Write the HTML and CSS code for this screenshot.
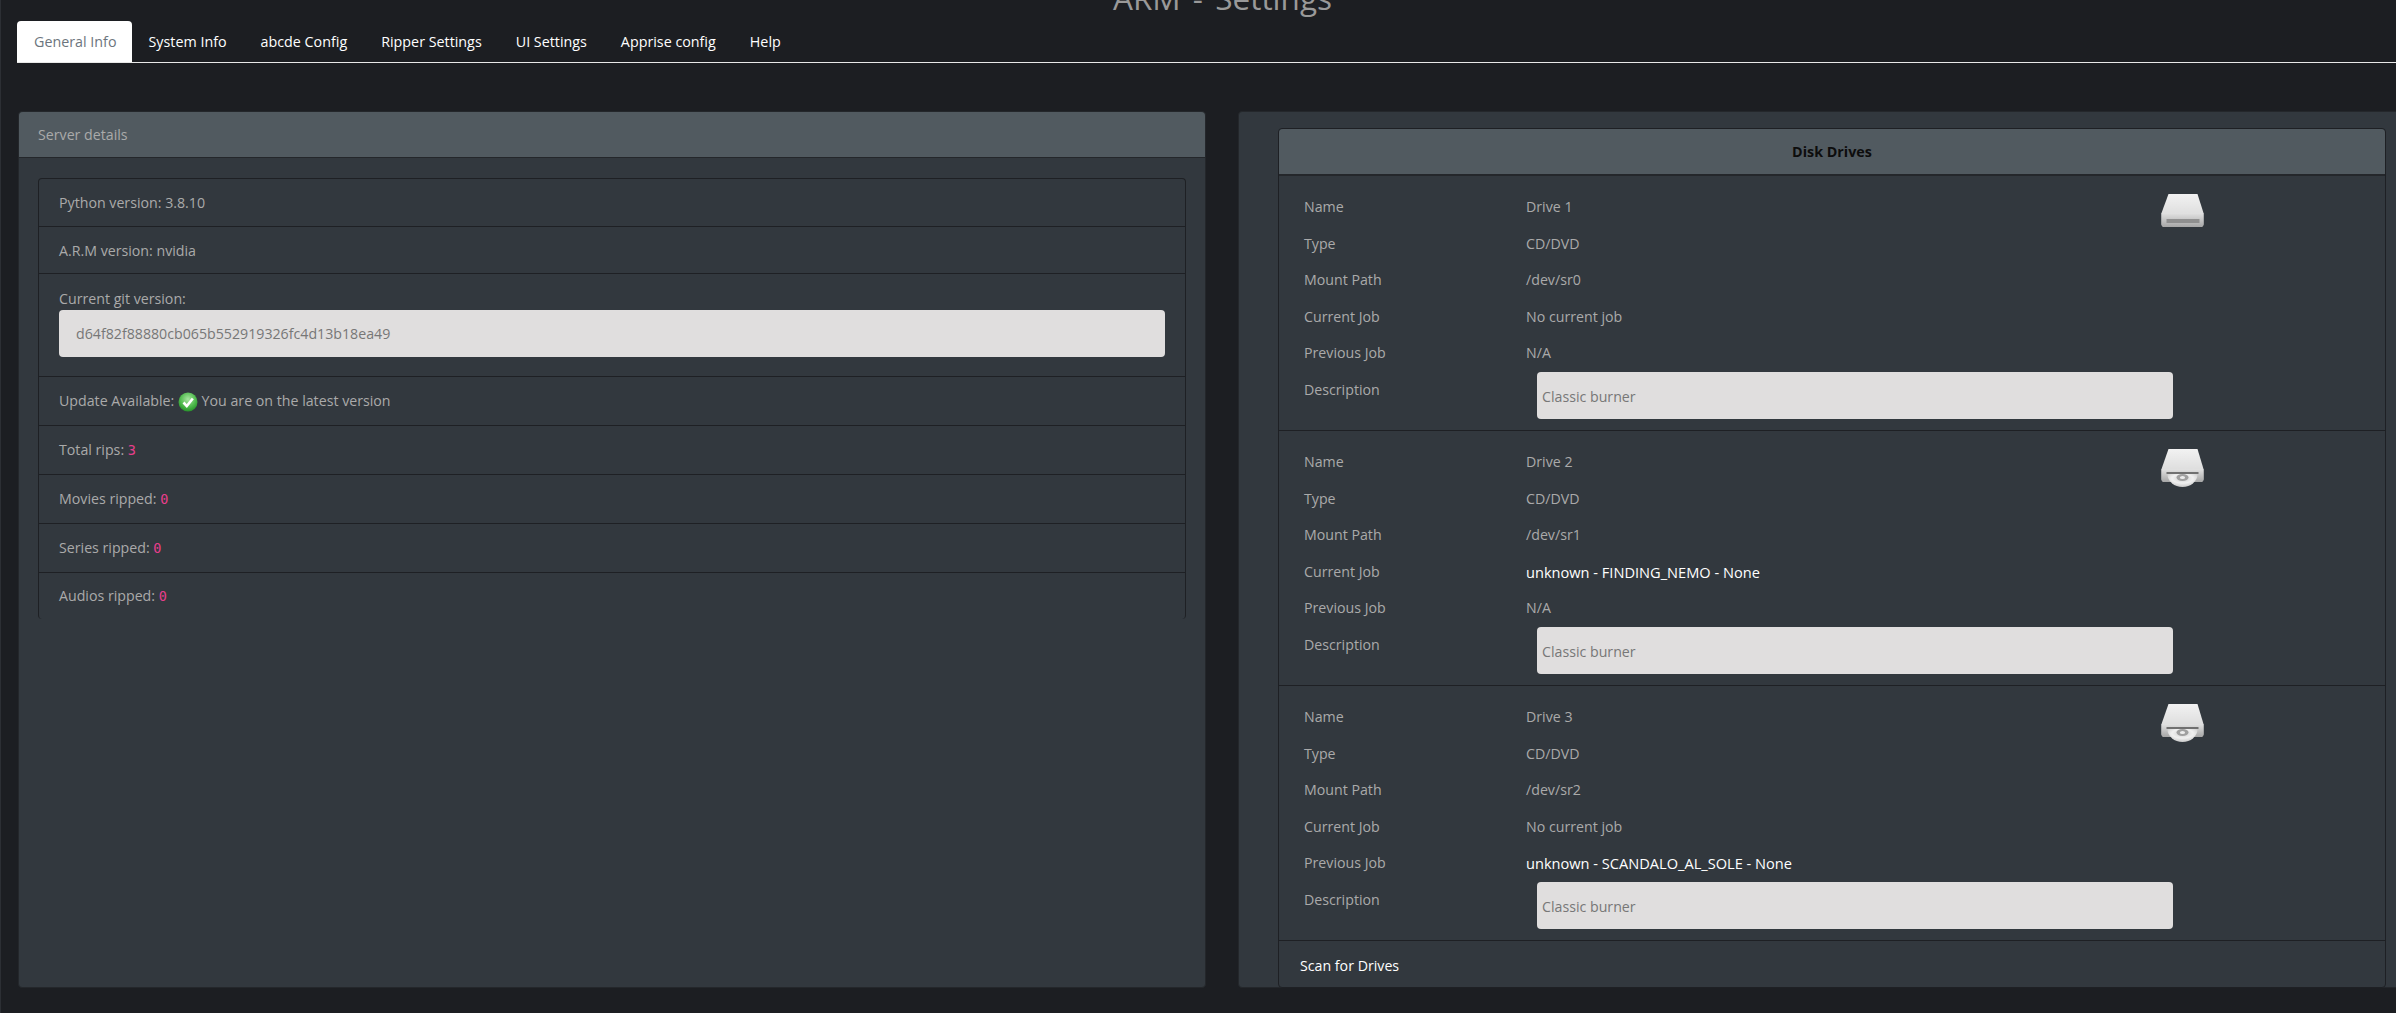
FILE: index.html
```html
<!DOCTYPE html>
<html lang="en">
<head>
<meta charset="utf-8">
<title>ARM - Settings</title>
<link rel="stylesheet" href="styles.css">
</head>
<body>
<svg class="defs" width="0" height="0" aria-hidden="true">
  <defs>
    <linearGradient id="top" x1="0" y1="0" x2="0" y2="1"><stop offset="0" stop-color="#f2f2f2"/><stop offset="1" stop-color="#d2d2d2"/></linearGradient>
    <linearGradient id="front" x1="0" y1="0" x2="0" y2="1"><stop offset="0" stop-color="#e2e2e2"/><stop offset="1" stop-color="#a6a6a6"/></linearGradient>
    <radialGradient id="disc" cx=".5" cy=".35" r=".7"><stop offset="0" stop-color="#cfcfcf"/><stop offset=".5" stop-color="#f0f0f0"/><stop offset="1" stop-color="#c2c2c2"/></radialGradient>
    <radialGradient id="ok" cx=".5" cy=".35" r=".7"><stop offset="0" stop-color="#a8e4a0"/><stop offset=".6" stop-color="#4cb84a"/><stop offset="1" stop-color="#1f8a24"/></radialGradient>
    <symbol id="drive-closed" viewBox="0 0 42 33">
      <path d="M7 0h29l6 19v11a3 3 0 0 1-3 3H3a3 3 0 0 1-3-3V19z" fill="url(#top)"/>
      <path d="M0 19h42v11a3 3 0 0 1-3 3H3a3 3 0 0 1-3-3z" fill="url(#front)"/>
      <rect x="5" y="25" width="33" height="4" fill="#8f8f8f"/>
    </symbol>
    <symbol id="drive-open" viewBox="0 0 42 38">
      <path d="M7 0h29l6 20v10a3 3 0 0 1-3 3H3a3 3 0 0 1-3-3V20z" fill="url(#top)"/>
      <path d="M0 20h42v10a3 3 0 0 1-3 3H3a3 3 0 0 1-3-3z" fill="url(#front)"/>
      <rect x="5" y="23" width="32" height="2" fill="#707070"/>
      <path d="M6 25h30a15 13 0 0 1-30 0z" fill="url(#disc)"/>
      <ellipse cx="21" cy="28.5" rx="6" ry="3.4" fill="#a0a0a0"/>
      <ellipse cx="21" cy="28.5" rx="2.6" ry="1.5" fill="#ececec"/>
    </symbol>
  </defs>
</svg>

<h1 class="page-title">ARM - Settings</h1>

<nav class="tabs">
  <a class="tab tab-active">General Info</a>
  <a class="tab">System Info</a>
  <a class="tab">abcde Config</a>
  <a class="tab">Ripper Settings</a>
  <a class="tab">UI Settings</a>
  <a class="tab">Apprise config</a>
  <a class="tab">Help</a>
</nav>

<main class="columns">
  <section class="card">
    <header class="card-head">Server details</header>
    <div class="card-body">
      <ul class="list">
        <li class="item item-first">Python version: 3.8.10</li>
        <li class="item item-second">A.R.M version: nvidia</li>
        <li class="item item-git">
          <div class="git-label">Current git version:</div>
          <div class="field field-git">d64f82f88880cb065b552919326fc4d13b18ea49</div>
        </li>
        <li class="item">Update Available:
          <svg class="ok-icon" viewBox="0 0 20 20" width="20" height="20" aria-hidden="true">
            <circle cx="10" cy="10" r="9.5" fill="url(#ok)"/>
            <path d="M5.5 10.5l3.3 3.6 6-7.6" fill="none" stroke="#fff" stroke-width="2.6"/>
          </svg>
          You are on the latest version</li>
        <li class="item">Total rips: <code class="num">3</code></li>
        <li class="item">Movies ripped: <code class="num">0</code></li>
        <li class="item">Series ripped: <code class="num">0</code></li>
        <li class="item item-last">Audios ripped: <code class="num">0</code></li>
      </ul>
    </div>
  </section>

  <section class="card card-right">
    <div class="drives">
      <header class="drives-head">Disk Drives</header>

      <div class="drive">
        <dl class="drive-info">
          <dt>Name</dt><dd>Drive 1</dd>
          <dt>Type</dt><dd>CD/DVD</dd>
          <dt>Mount Path</dt><dd>/dev/sr0</dd>
          <dt>Current Job</dt><dd>No current job</dd>
          <dt>Previous Job</dt><dd>N/A</dd>
          <dt>Description</dt><dd class="desc"><div class="field field-desc">Classic burner</div></dd>
        </dl>
        <svg class="drive-icon" width="43" height="33"><use href="#drive-closed"/></svg>
      </div>

      <div class="drive">
        <dl class="drive-info">
          <dt>Name</dt><dd>Drive 2</dd>
          <dt>Type</dt><dd>CD/DVD</dd>
          <dt>Mount Path</dt><dd>/dev/sr1</dd>
          <dt>Current Job</dt><dd class="link">unknown - FINDING_NEMO - None</dd>
          <dt>Previous Job</dt><dd>N/A</dd>
          <dt>Description</dt><dd class="desc"><div class="field field-desc">Classic burner</div></dd>
        </dl>
        <svg class="drive-icon" width="43" height="38"><use href="#drive-open"/></svg>
      </div>

      <div class="drive">
        <dl class="drive-info">
          <dt>Name</dt><dd>Drive 3</dd>
          <dt>Type</dt><dd>CD/DVD</dd>
          <dt>Mount Path</dt><dd>/dev/sr2</dd>
          <dt>Current Job</dt><dd>No current job</dd>
          <dt>Previous Job</dt><dd class="link">unknown - SCANDALO_AL_SOLE - None</dd>
          <dt>Description</dt><dd class="desc"><div class="field field-desc">Classic burner</div></dd>
        </dl>
        <svg class="drive-icon" width="43" height="38"><use href="#drive-open"/></svg>
      </div>

      <footer class="scan">Scan for Drives</footer>
    </div>
  </section>
</main>
</body>
</html>
```
FILE: styles.css
```css
* { box-sizing: border-box; }
html, body { height: 100%; }
body {
  margin: 0;
  height: 1013px;
  overflow: hidden;
  background: #1c1e22;
  border-left: 1px solid #2c2f34;
  color: #aaa;
  font-family: "Open Sans", "Noto Sans", sans-serif;
  font-size: 14.2px;
  line-height: 24px;
}
.defs { display: block; height: 0; }
.page-title {
  height: 21px;
  margin: 0;
  padding: 0 0 2px 48px;
  overflow: hidden;
  display: flex;
  justify-content: center;
  align-items: flex-end;
  font-size: 31.5px;
  font-weight: 500;
  line-height: 43px;
  word-spacing: 4px;
  color: #999;
  white-space: pre;
}
.tabs {
  display: flex;
  height: 42px;
  margin-left: 16px;
  border-bottom: 1px solid #e8e8e8;
}
.tab {
  height: 41px;
  padding: 9px 17px;
  color: #fff;
  font-size: 14.3px;
}
.tab-active {
  padding-right: 15px;
  background: #fff;
  color: #6c757d;
  border-radius: 4px 4px 0 0;
}
.columns {
  display: grid;
  grid-template-columns: 1188px 1170px;
  gap: 32px;
  margin: 48px 0 0 17px;
}
.card {
  height: 877px;
  background: #32383e;
  border: 1px solid #24272b;
  border-radius: 4px;
}
.card-head {
  height: 46px;
  padding: 11px 19px;
  background: #515a60;
  border-bottom: 1px solid #24272b;
  border-radius: 4px 4px 0 0;
  color: #aaa;
}
.card-body { padding: 20px 19px 0; }
.list {
  list-style: none;
  margin: 0;
  padding: 0;
  height: 441px;
  border: 1px solid #1e2024;
  border-bottom: 0;
  border-radius: 4px;
}
.item {
  height: 49px;
  padding: 12px 20px;
  border-bottom: 1px solid #1e2024;
}
.item-first { height: 48px; }
.item-second { height: 47px; }
.item-git { height: 103px; padding-top: 13px; }
.item-last { border-bottom: 0; padding-top: 11px; }
.git-label { height: 23px; }
.field {
  background: #e0dede;
  color: #777;
  border-radius: 4px;
  height: 47px;
}
.field-git { padding: 12px 17px; }
.field-desc { padding: 13px 5px 0; height: 47px; }
.ok-icon { vertical-align: -6px; }
.num {
  color: #e83e8c;
  font-family: "DejaVu Sans Mono", monospace;
  font-size: 13.5px;
}
.card-right {
  padding: 16px 21px 0 39px;
}
.drives {
  height: 860px;
  background: #32383e;
  border: 1px solid #1e2024;
  border-radius: 4px;
}
.drives-head {
  height: 47px;
  padding: 11px 0;
  background: #515a60;
  border-bottom: 2px solid #24272b;
  border-radius: 4px 4px 0 0;
  color: #0d0d0d;
  font-weight: 700;
  text-align: center;
  font-size: 14.3px;
}
.drive {
  position: relative;
  height: 255px;
  padding: 19px 0 0 25px;
  border-bottom: 1px solid #1e2024;
}
.drive-info {
  display: grid;
  grid-template-columns: 222px 647px;
  grid-auto-rows: 36.5px;
  margin: 0;
}
.drive-info dt { font-weight: 400; }
.drive-info dd { margin: 0; }
.desc { padding-left: 11px; margin-top: -6px !important; }
.link { color: #fff; font-size: 14.6px; }
.drive-icon {
  position: absolute;
  top: 18px;
  left: 882px;
}
.scan {
  padding: 13px 21px;
  color: #fff;
}
```
